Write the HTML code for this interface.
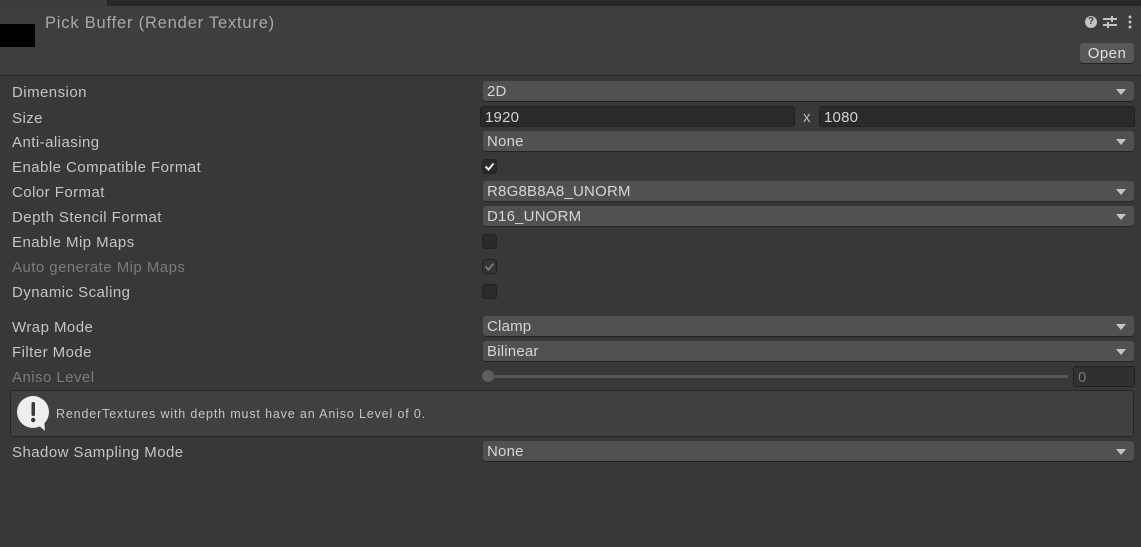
<!DOCTYPE html><html><head><style>
body{margin:0;width:1141px;height:547px;background:#383838;font-family:"Liberation Sans",sans-serif;font-size:15px;letter-spacing:0.45px;color:#c4c4c4;position:relative;overflow:hidden}
.a{position:absolute}
.lbl{position:absolute;left:12px;line-height:20px;margin-top:2px}
.dd{position:absolute;left:483px;width:651px;height:20px;background:#515151;border-radius:3px;box-shadow:0 1px 0 #232323;color:#d4d4d4;line-height:21px;text-indent:4px;letter-spacing:0.2px}
.dd:after{content:"";position:absolute;right:8px;top:8px;border-left:5px solid transparent;border-right:5px solid transparent;border-top:6px solid #c4c4c4}
.cb{position:absolute;left:482px;width:15px;height:15px;background:#2a2a2a;border:1px solid #222;border-radius:3px;box-sizing:border-box}
.tf{position:absolute;height:21px;background:#2a2a2a;border:1px solid #212121;border-radius:3px;box-sizing:border-box;line-height:21px;text-indent:4px;color:#d2d2d2;letter-spacing:0.2px}
</style></head><body>
<div class="a" style="left:0;top:0;width:1141px;height:6px;background:#282828"></div>
<div class="a" style="left:0;top:0;width:107px;height:6px;background:#3c3c3c"></div>
<div class="a" style="left:0;top:6px;width:1141px;height:69px;background:#3e3e3e"></div>
<div class="a" style="left:0;top:75px;width:1141px;height:1px;background:#232323"></div>
<div class="a" style="left:0;top:24px;width:35px;height:23px;background:#000"></div>
<div class="a" style="left:45px;top:14px;font-size:16.5px;letter-spacing:0.8px;color:#a8a8a8">Pick Buffer (Render Texture)</div>
<div class="a" style="left:1085px;top:16px;width:12px;height:12px;border-radius:50%;background:#c4c4c4;color:#3e3e3e;font-size:10px;font-weight:bold;text-align:center;line-height:12px;letter-spacing:0">?</div>
<svg class="a" style="left:1103px;top:15px" width="14" height="14"><path d="M0 4h14M0 10h14" stroke="#c4c4c4" stroke-width="2" /><path d="M9 1v6M5 7v6" stroke="#c4c4c4" stroke-width="2"/></svg>
<svg class="a" style="left:1127px;top:15px" width="6" height="14"><circle cx="3" cy="2" r="1.5" fill="#c4c4c4"/><circle cx="3" cy="7" r="1.5" fill="#c4c4c4"/><circle cx="3" cy="12" r="1.5" fill="#c4c4c4"/></svg>
<div class="a" style="left:1080px;top:43px;width:54px;height:20px;background:#585858;border-radius:3px;box-shadow:0 1px 0 #232323;text-align:center;line-height:21px;color:#e0e0e0;font-size:15px">Open</div>

<div class="lbl" style="top:81px">Dimension</div><div class="dd" style="top:81px">2D</div>
<div class="lbl" style="top:107px">Size</div>
<div class="tf" style="left:480px;top:106px;width:315px">1920</div>
<div class="a" style="left:803px;top:109px;color:#bbb">x</div>
<div class="tf" style="left:819px;top:106px;width:316px">1080</div>
<div class="lbl" style="top:131px">Anti-aliasing</div><div class="dd" style="top:131px">None</div>
<div class="lbl" style="top:156px">Enable Compatible Format</div>
<div class="cb" style="top:159px"><svg width="15" height="15" style="position:absolute;left:-1px;top:-1px"><path d="M3.5 7.5l3 3 5-6" stroke="#eee" stroke-width="2" fill="none"/></svg></div>
<div class="lbl" style="top:181px">Color Format</div><div class="dd" style="top:181px">R8G8B8A8_UNORM</div>
<div class="lbl" style="top:206px">Depth Stencil Format</div><div class="dd" style="top:206px">D16_UNORM</div>
<div class="lbl" style="top:231px">Enable Mip Maps</div><div class="cb" style="top:234px"></div>
<div class="lbl" style="top:256px;color:#7a7a7a">Auto generate Mip Maps</div>
<div class="cb" style="top:259px;background:#333"><svg width="15" height="15" style="position:absolute;left:-1px;top:-1px"><path d="M3.5 7.5l3 3 5-6" stroke="#777" stroke-width="2" fill="none"/></svg></div>
<div class="lbl" style="top:281px">Dynamic Scaling</div><div class="cb" style="top:284px"></div>

<div class="lbl" style="top:316px">Wrap Mode</div><div class="dd" style="top:316px">Clamp</div>
<div class="lbl" style="top:341px">Filter Mode</div><div class="dd" style="top:341px">Bilinear</div>
<div class="lbl" style="top:366px;color:#7a7a7a">Aniso Level</div>
<div class="a" style="left:488px;top:375px;width:580px;height:3px;background:#555"></div>
<div class="a" style="left:482px;top:370px;width:12px;height:12px;border-radius:50%;background:#5e5e5e"></div>
<div class="tf" style="left:1073px;top:366px;width:62px;color:#777;background:#303030">0</div>

<div class="a" style="left:10px;top:390px;width:1124px;height:47px;background:#404040;border:1px solid #262626;border-radius:3px;box-sizing:border-box"></div>
<svg class="a" style="left:17px;top:396px" width="34" height="36"><circle cx="16" cy="16" r="16" fill="#eee"/><path d="M20 28l8 7-1-12z" fill="#eee"/><rect x="14.5" y="6" width="3.5" height="14" rx="1.5" fill="#3a3a3a"/><circle cx="16.2" cy="24" r="2.2" fill="#3a3a3a"/></svg>
<div class="a" style="left:56px;top:407px;font-size:12.5px;color:#c4c4c4;letter-spacing:0.85px">RenderTextures with depth must have an Aniso Level of 0.</div>
<div class="lbl" style="top:441px">Shadow Sampling Mode</div><div class="dd" style="top:441px">None</div>
</body></html>
